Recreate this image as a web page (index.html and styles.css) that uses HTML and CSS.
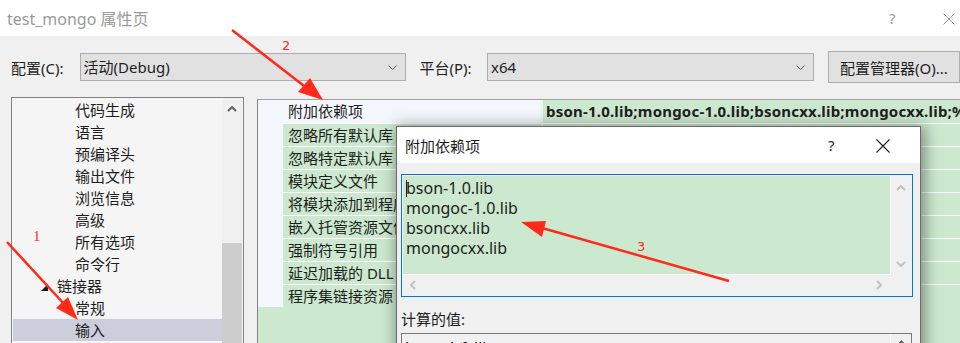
FILE: index.html
```html
<!DOCTYPE html>
<html lang="zh-CN">
<head>
<meta charset="UTF-8">
<title>test_mongo 属性页</title>
<link rel="stylesheet" href="styles.css">
</head>
<body>
<div class="window">
  <div class="titlebar">
    <span class="title">test_mongo 属性页</span>
    <span class="caption-help">?</span>
    <span class="caption-close">
      <svg width="12" height="12" viewBox="0 0 12 12"><path d="M0.5 0.5L11.5 11.5M11.5 0.5L0.5 11.5" stroke="#999" stroke-width="1" fill="none"/></svg>
    </span>
  </div>

  <div class="toolbar">
    <span class="tb-label">配置(C):</span>
    <div class="combo">
      <span>活动(Debug)</span>
      <svg class="combo-arrow" width="9" height="5" viewBox="0 0 9 5"><path d="M0.5 0.5L4.5 4.5L8.5 0.5" stroke="#555" fill="none"/></svg>
    </div>
    <span class="tb-label tb-label-platform">平台(P):</span>
    <div class="combo">
      <span>x64</span>
      <svg class="combo-arrow" width="9" height="5" viewBox="0 0 9 5"><path d="M0.5 0.5L4.5 4.5L8.5 0.5" stroke="#555" fill="none"/></svg>
    </div>
    <button class="btn">配置管理器(O)...</button>
  </div>

  <div class="main">
    <div class="tree">
      <ul class="tree-list">
        <li class="lvl2">代码生成</li>
        <li class="lvl2">语言</li>
        <li class="lvl2">预编译头</li>
        <li class="lvl2">输出文件</li>
        <li class="lvl2">浏览信息</li>
        <li class="lvl2">高级</li>
        <li class="lvl2">所有选项</li>
        <li class="lvl2">命令行</li>
        <li class="lvl1"><svg class="expander" width="7" height="7" viewBox="0 0 7 7"><path d="M0 7L7 7L7 0Z" fill="#1e1e1e"/></svg>链接器</li>
        <li class="lvl2">常规</li>
        <li class="lvl2 selected">输入</li>
      </ul>
      <div class="vscroll">
        <div class="sb-btn">
          <svg width="10" height="6" viewBox="0 0 10 6"><path d="M1 5L5 1L9 5" stroke="#606060" stroke-width="2" fill="none"/></svg>
        </div>
        <div class="sb-track"><div class="sb-thumb"></div></div>
      </div>
    </div>

    <div class="grid">
      <div class="row first">
        <div class="strip"></div>
        <div class="name">附加依赖项</div>
        <div class="value">bson-1.0.lib;mongoc-1.0.lib;bsoncxx.lib;mongocxx.lib;%(AdditionalDependencies)</div>
      </div>
      <div class="row"><div class="strip"></div><div class="name">忽略所有默认库</div><div class="value"></div></div>
      <div class="row"><div class="strip"></div><div class="name">忽略特定默认库</div><div class="value"></div></div>
      <div class="row"><div class="strip"></div><div class="name">模块定义文件</div><div class="value"></div></div>
      <div class="row"><div class="strip"></div><div class="name">将模块添加到程序集</div><div class="value"></div></div>
      <div class="row"><div class="strip"></div><div class="name">嵌入托管资源文件</div><div class="value"></div></div>
      <div class="row"><div class="strip"></div><div class="name">强制符号引用</div><div class="value"></div></div>
      <div class="row"><div class="strip"></div><div class="name">延迟加载的 DLL</div><div class="value"></div></div>
      <div class="row"><div class="strip"></div><div class="name">程序集链接资源</div><div class="value"></div></div>
    </div>
  </div>

  <!-- modal dialog over the property grid -->
  <div class="dialog">
    <div class="dlg-titlebar">
      <span class="dlg-title">附加依赖项</span>
      <span class="dlg-help">?</span>
      <span class="dlg-close">
        <svg width="14" height="14" viewBox="0 0 14 14"><path d="M0.5 0.5L13.5 13.5M13.5 0.5L0.5 13.5" stroke="#1e1e1e" stroke-width="1.1" fill="none"/></svg>
      </span>
    </div>
    <div class="dlg-body">
      <div class="editbox">
        <div class="edit-text">
          <div class="line"><span class="caret"></span>bson-1.0.lib</div>
          <div class="line">mongoc-1.0.lib</div>
          <div class="line">bsoncxx.lib</div>
          <div class="line">mongocxx.lib</div>
        </div>
        <div class="edit-vscroll">
          <svg width="10" height="6" viewBox="0 0 10 6"><path d="M1 5L5 1L9 5" stroke="#c2c2c2" stroke-width="2" fill="none"/></svg>
          <svg width="10" height="6" viewBox="0 0 10 6"><path d="M1 1L5 5L9 1" stroke="#c2c2c2" stroke-width="2" fill="none"/></svg>
        </div>
        <div class="edit-hscroll">
          <svg width="6" height="10" viewBox="0 0 6 10"><path d="M5 1L1 5L5 9" stroke="#c2c2c2" stroke-width="2" fill="none"/></svg>
          <svg width="6" height="10" viewBox="0 0 6 10"><path d="M1 1L5 5L1 9" stroke="#c2c2c2" stroke-width="2" fill="none"/></svg>
        </div>
        <div class="edit-corner"></div>
      </div>
      <div class="calc-label">计算的值:</div>
      <div class="calcbox">
        <div class="calc-text">bson-1.0.lib</div>
        <div class="calc-scroll">
          <svg width="7" height="4" viewBox="0 0 7 4"><path d="M0 4L3.5 0L7 4Z" fill="#606060"/></svg>
        </div>
      </div>
    </div>
  </div>

  <!-- red annotation arrows -->
  <svg class="annotations" width="960" height="343" viewBox="0 0 960 343">
    <g stroke="#ff2a1a" stroke-width="2.5" fill="none">
      <line x1="232" y1="30" x2="308" y2="89"/>
      <line x1="7" y1="242" x2="65" y2="305"/>
      <line x1="729" y1="281" x2="542" y2="228"/>
    </g>
    <g fill="#ff2a1a">
      <polygon points="323,100 298,92 310,78"/>
      <polygon points="78,320 56,308 68,297"/>
      <polygon points="521,222 546,221 542,237"/>
    </g>
    <text class="num num-serif" x="33" y="241">1</text>
    <text class="num" x="282" y="50">2</text>
    <text class="num" x="637" y="251">3</text>
  </svg>
</div>
</body>
</html>
```

FILE: styles.css
```css
body {
  margin: 0;
  background-color: #f0f0f0;
  font-family: "Noto Sans", "Noto Sans CJK SC", sans-serif;
  color: #1e1e1e;
  overflow: hidden;
}

.window {
  position: relative;
  width: 960px;
  height: 343px;
  overflow: hidden;
}

/* title bar */
.titlebar {
  height: 36px;
  background-color: #fff;
  display: flex;
  align-items: center;
  padding-left: 7px;
}

.title {
  font-size: 16px;
  color: #9a9a9a;
  flex: 1;
}

.caption-help {
  font-size: 15px;
  color: #9a9a9a;
  width: 49px;
}

.caption-close {
  width: 22px;
  display: flex;
  padding-left: 5px;
  box-sizing: border-box;
  margin-top: 2px;
}

/* configuration row */
.toolbar {
  display: flex;
  align-items: center;
  margin-top: 15px;
  padding-left: 11px;
  height: 32px;
  font-size: 15px;
}

.tb-label {
  width: 69px;
}

.tb-label-platform {
  width: 68px;
  margin-left: 13px;
}

.combo {
  width: 324px;
  height: 26px;
  background-color: #e1e1e1;
  border: 1px solid #adadad;
  display: flex;
  align-items: center;
  justify-content: space-between;
  padding-left: 3px;
  box-sizing: content-box;
}

.combo span {
  line-height: 26px;
}

.combo-arrow {
  margin-right: 8px;
}

.btn {
  margin-left: 14px;
  width: 133px;
  height: 32px;
  background-color: #e1e1e1;
  border: 1px solid #adadad;
  font-family: inherit;
  font-size: 15px;
  color: #1e1e1e;
  padding: 0;
}

/* tree + property grid */
.main {
  display: flex;
  margin-top: 14px;
  padding-left: 11px;
  gap: 13px;
}

.tree {
  width: 231px;
  height: 270px;
  border: 1px solid #828282;
  background-color: #f5f5f5;
  display: flex;
  flex-shrink: 0;
}

.tree-list {
  list-style: none;
  margin: 0;
  padding: 1px 0 0 1px;
  flex: 1;
  font-size: 15px;
}

.tree-list li {
  height: 22px;
  line-height: 22px;
  display: flex;
  align-items: center;
}

.tree-list .lvl2 {
  padding-left: 62px;
}

.tree-list .lvl1 {
  padding-left: 28px;
}

.expander {
  margin-right: 9px;
  margin-top: 2px;
}

.tree-list .selected {
  background-color: #cccedb;
}

.vscroll {
  width: 20px;
  background-color: #f0f0f0;
  display: flex;
  flex-direction: column;
  margin-right: 1px;
  overflow: hidden;
}

.sb-btn {
  height: 22px;
  flex-shrink: 0;
  display: flex;
  align-items: center;
  justify-content: center;
}

.sb-track {
  flex-shrink: 0;
  padding-top: 123px;
}

.sb-thumb {
  height: 200px;
  background-color: #cdcdcd;
}

.grid {
  flex: 1;
  margin-top: 2px;
  height: 260px;
  border-left: 1px solid #828282;
  border-top: 1px solid #a0a0a0;
  background-color: #cce8cf;
  font-size: 15px;
}

.row {
  display: flex;
  height: 23px;
}

.strip {
  width: 25px;
  background-color: #f3f6fb;
  flex-shrink: 0;
}

.name {
  width: 253px;
  padding-left: 5px;
  border-top: 1px solid #fff;
  line-height: 22px;
  white-space: nowrap;
  flex-shrink: 0;
}

.value {
  flex: 1;
  border-top: 1px solid #fff;
  border-left: 2px solid #eef3ee;
  padding-left: 3px;
  line-height: 22px;
  white-space: nowrap;
  overflow: hidden;
  font-weight: bold;
  letter-spacing: 0.2px;
}

.row.first .name,
.row.first .value {
  border-top: none;
  line-height: 23px;
}

.row.first .name {
  background-color: #f3f6fb;
}

/* dialog window */
.dialog {
  position: absolute;
  left: 396px;
  top: 126px;
  width: 523px;
  height: 240px;
  border: 1px solid #6a6a6a;
  background-color: #f0f0f0;
  box-shadow: 2px 2px 14px 2px rgba(0, 0, 0, 0.4);
}

.dlg-titlebar {
  height: 36px;
  background-color: #fff;
  display: flex;
  align-items: center;
  padding-left: 8px;
  font-size: 15px;
}

.dlg-title {
  flex: 1;
}

.dlg-help {
  width: 48px;
}

.dlg-close {
  width: 44px;
  display: flex;
  margin-top: 1px;
}

.dlg-body {
  padding: 11px 0 0 4px;
}

.editbox {
  width: 508px;
  height: 119px;
  border: 1px solid #0078d7;
  padding: 1px;
  display: grid;
  grid-template-columns: 488px 20px;
  grid-template-rows: 99px 20px;
}

.edit-text {
  background-color: #cce8cf;
  border-right: 1px solid #fff;
  border-bottom: 1px solid #fff;
  padding: 2px 0 0 3px;
  font-size: 16px;
}

.line {
  height: 20px;
  line-height: 20px;
  display: flex;
  align-items: center;
}

.caret {
  width: 1px;
  height: 17px;
  background-color: #1e1e1e;
  margin-right: -1px;
}

.edit-vscroll {
  display: flex;
  flex-direction: column;
  justify-content: space-between;
  align-items: center;
  padding: 9px 0 8px;
}

.edit-hscroll {
  display: flex;
  justify-content: space-between;
  align-items: center;
  padding: 0 9px 0 7px;
}

.calc-label {
  font-size: 15px;
  line-height: 20px;
  margin-top: 12px;
}

.calcbox {
  margin-top: 4px;
  width: 509px;
  height: 60px;
  border: 1px solid #7a7a7a;
  display: flex;
}

.calc-text {
  flex: 1;
  font-size: 16px;
  line-height: 20px;
  padding: 4px 0 0 3px;
  border-right: 1px solid #fafafa;
}

.calc-scroll {
  width: 20px;
  display: flex;
  justify-content: center;
  padding-top: 6px;
}

/* annotations */
.annotations {
  position: absolute;
  left: 0;
  top: 0;
  pointer-events: none;
}

.num {
  fill: #ff2a1a;
  font-family: "DejaVu Sans", sans-serif;
  font-size: 13px;
}

.num-serif {
  font-family: "Liberation Serif", serif;
  font-size: 15px;
}
```
